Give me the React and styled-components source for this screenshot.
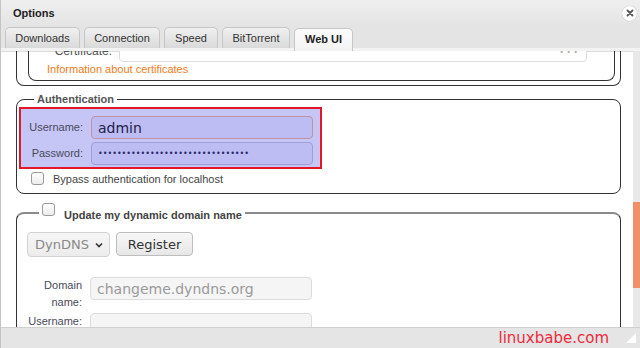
import React from 'react';
import styled, { createGlobalStyle } from 'styled-components';

const Global = createGlobalStyle`
	html, body { margin: 0; padding: 0; background: #fff; }
	body { font-family: 'Liberation Sans', Arial, sans-serif; font-size: 11px; color: #333; }
	* { box-sizing: border-box; }
`;

const Window = styled.div`
	width: 640px;
	height: 348px;
	display: flex;
	flex-direction: column;
	overflow: hidden;
	border-left: 1px solid #c4c4c4;
	background: #fff;
`;

const TitleBar = styled.div`
	height: 26px;
	flex: none;
	display: flex;
	align-items: center;
	justify-content: space-between;
	padding: 0 3px 0 12px;
	background: linear-gradient(#efefef, #e4e4e4);
	font-weight: 700;
	font-size: 11px;
	color: #222;
`;

const Close = styled.span`
	width: 15px;
	height: 15px;
	border-radius: 50%;
	background: #fff;
	display: flex;
	align-items: center;
	justify-content: center;
	box-shadow: 0 0 1px rgba(0, 0, 0, 0.3);
`;

const TabBar = styled.div`
	height: 25px;
	flex: none;
	display: flex;
	align-items: flex-end;
	gap: 4px;
	padding: 0 0 0 4px;
	background: #e4e4e4;
	border-bottom: 3px solid #f3f3f3;
	box-shadow: 0 1px 0 #dcdcdc;
`;

const Tab = styled.div`
	height: ${(p) => (p.$active ? '23px' : '21px')};
	margin-bottom: ${(p) => (p.$active ? '-3px' : '0')};
	display: flex;
	align-items: center;
	justify-content: center;
	width: ${(p) => p.$w}px;
	border: 1px solid #c6c6c6;
	border-bottom: none;
	border-radius: 5px 5px 0 0;
	background: ${(p) => (p.$active ? 'linear-gradient(#fbfbfb, #f3f3f3)' : 'linear-gradient(#f0f0f0, #dadada)')};
	font-weight: ${(p) => (p.$active ? 700 : 400)};
	color: ${(p) => (p.$active ? '#222' : '#333')};
	padding-bottom: ${(p) => (p.$active ? '2px' : '0')};
`;

const Body = styled.div`
	flex: 1;
	display: flex;
	min-height: 0;
`;

const Content = styled.div`
	flex: 1;
	overflow: hidden;
	display: flex;
	flex-direction: column;
	padding: 0 12px 0 15px;
`;

const Scrollbar = styled.div`
	width: 7px;
	flex: none;
	background: #e8e8e8;
	padding-top: 151px;
`;

const Thumb = styled.div`
	height: 86px;
	background: #f08f68;
`;

const TailBox = styled.div`
	border: 1px solid #333;
	border-top: none;
	border-radius: 0 0 8px 8px;
	padding: ${(p) => p.$pad};
`;

const CertRow = styled.div`
	display: flex;
	align-items: center;
	margin-top: -11px;
	height: 22px;
	gap: 7px;
`;

const CertLabel = styled.span`
	width: 83px;
	text-align: right;
	color: #555;
	font-size: 12px;
`;

const CertInput = styled.div`
	width: 468px;
	height: 22px;
	border: 1px solid #ddd;
	border-radius: 4px;
	background: #fff;
	display: flex;
	align-items: flex-end;
	justify-content: flex-end;
	padding: 0 8px 5px;
	color: #aaa;
	font-size: 8px;
	letter-spacing: 1px;
`;

const InfoLink = styled.a`
	display: block;
	color: #f27c20;
	line-height: 14px;
	margin: 0 0 4px 18px;
	font-size: 11px;
`;

const Fieldset = styled.fieldset`
	margin: ${(p) => p.$mt}px 0 0;
	padding: 0 ${(p) => p.$px}px ${(p) => p.$pb}px;
	border: 1px solid #333;
	border-top: ${(p) => (p.$softTop ? '2px solid #8a8a8a' : '1px solid #333')};
	border-radius: 8px;
	min-width: 0;
`;

const Legend = styled.legend`
	margin-left: ${(p) => p.$ml}px;
	padding: 0 3px;
	font-weight: 700;
	font-size: 11px;
	line-height: 13px;
	color: ${(p) => p.$color};
	display: flex;
	align-items: flex-end;
	gap: 9px;
`;

const Highlight = styled.div`
	margin-top: 1px;
	width: 303px;
	border: 2px solid #e3172b;
	background: #c5c5f6;
	padding: 7px 8px 2px 0;
	display: grid;
	grid-template-columns: 62px 222px;
	column-gap: 8px;
	row-gap: 3px;
	align-items: center;
`;

const Label = styled.span`
	text-align: right;
	color: #4a4a5a;
	font-size: 11px;
	line-height: ${(p) => p.$lh || 13}px;
	align-self: ${(p) => (p.$top ? 'start' : 'center')};
`;

const Input = styled.div`
	height: 23px;
	border-radius: 4px;
	border: 1px solid ${(p) => p.$border};
	background: ${(p) => p.$bg};
	display: flex;
	align-items: center;
	padding-left: 6px;
	font-family: 'DejaVu Sans', sans-serif;
	font-size: ${(p) => p.$size || 14}px;
	color: ${(p) => p.$color};
	overflow: hidden;
	white-space: nowrap;
`;

const CheckRow = styled.label`
	display: flex;
	align-items: center;
	gap: 9px;
	margin: 2px 0 0 12px;
	height: 15px;
	color: #444;
	font-size: 11px;
`;

const Check = styled.span`
	width: 13px;
	height: 13px;
	flex: none;
	border: 1px solid #9a9a9a;
	border-radius: 3px;
	background: linear-gradient(#fff, #ececec);
	margin-bottom: ${(p) => p.$mb || 0}px;
`;

const LegendText = styled.span`
	color: #444;
`;

const Controls = styled.div`
	display: flex;
	gap: 6px;
	margin-top: 10px;
`;

const Select = styled.div`
	width: 83px;
	height: 25px;
	border: 1px solid #d2d2d2;
	border-radius: 4px;
	background: linear-gradient(#f6f6f6, #ececec);
	display: flex;
	align-items: center;
	gap: 6px;
	padding-left: 7px;
	font-family: 'DejaVu Sans', sans-serif;
	font-size: 13px;
	color: #8a8a8a;
`;

const Button = styled.div`
	width: 77px;
	height: 24px;
	border: 1px solid #bdbdbd;
	border-radius: 4px;
	background: linear-gradient(#f7f7f7, #e7e7e7);
	display: flex;
	align-items: center;
	justify-content: center;
	font-family: 'DejaVu Sans', sans-serif;
	font-size: 13px;
	color: #333;
`;

const FormGrid = styled.div`
	display: grid;
	grid-template-columns: 56px 222px;
	column-gap: 8px;
	row-gap: 2px;
	margin-top: 20px;
	margin-left: -1px;
`;

const StatusBar = styled.div`
	height: 21px;
	flex: none;
	display: flex;
	align-items: center;
	justify-content: flex-end;
	gap: 17px;
	padding-right: 4px;
	background: #e5e5e5;
	border-top: 1px solid #d0d0d0;
`;

const Watermark = styled.span`
	font-family: 'DejaVu Sans', sans-serif;
	font-size: 15px;
	color: #ee2a3c;
`;

const tabs = [
	['Downloads', 75],
	['Connection', 76],
	['Speed', 54],
	['BitTorrent', 68],
	['Web UI', 59],
];

export default function App() {
	return (
		<>
			<Global />
			<Window>
				<TitleBar>
					Options
					<Close>
						<svg width='8' height='8' viewBox='0 0 8 8'>
							<path d='M1.5 1.5L6.5 6.5M6.5 1.5L1.5 6.5' stroke='#555' strokeWidth='1.8' strokeLinecap='round' />
						</svg>
					</Close>
				</TitleBar>
				<TabBar>
					{tabs.map(([name, w]) => (
						<Tab key={name} $w={w} $active={name === 'Web UI'}>
							{name}
						</Tab>
					))}
				</TabBar>
				<Body>
					<Content>
						<TailBox $pad='0 5px 4px 11px'>
							<TailBox $pad='0'>
								<CertRow>
									<CertLabel>Certificate:</CertLabel>
									<CertInput>• • •</CertInput>
								</CertRow>
								<InfoLink>Information about certificates</InfoLink>
							</TailBox>
						</TailBox>

						<Fieldset $mt={7} $px={2} $pb={7}>
							<Legend $ml={15} $color='#555'>Authentication</Legend>
							<Highlight>
								<Label>Username:</Label>
								<Input $border='#c4919f' $bg='#bdbdf3' $color='#22224a'>admin</Input>
								<Label>Password:</Label>
								<Input $border='#9f9fd6' $bg='#bdbdf3' $color='#2a2a66' $size={8}>
									{'•'.repeat(32)}
								</Input>
							</Highlight>
							<CheckRow>
								<Check />
								Bypass authentication for localhost
							</CheckRow>
						</Fieldset>

						<Fieldset $mt={9} $px={10} $pb={20} $softTop>
							<Legend $ml={12} $color='#444'>
								<Check $mb={6} />
								<LegendText>Update my dynamic domain name</LegendText>
							</Legend>
							<Controls>
								<Select>
									DynDNS
									<svg width='8' height='6' viewBox='0 0 8 6'>
										<path d='M1 1.5L4 4.5L7 1.5' fill='none' stroke='#333' strokeWidth='1.6' />
									</svg>
								</Select>
								<Button>Register</Button>
							</Controls>
							<FormGrid>
								<Label $lh={17} $top>
									Domain
									<br />
									name:
								</Label>
								<Input $border='#dcdcdc' $bg='#f5f5f5' $color='#9a9a9a'>changeme.dyndns.org</Input>
								<Label $lh={17} $top>Username:</Label>
								<Input $border='#dcdcdc' $bg='#f5f5f5' $color='#9a9a9a' />
							</FormGrid>
						</Fieldset>
					</Content>
					<Scrollbar>
						<Thumb />
					</Scrollbar>
				</Body>
				<StatusBar>
					<Watermark>linuxbabe.com</Watermark>
					<svg width='10' height='10' viewBox='0 0 10 10'>
						<path d='M10 0L10 10L0 10Z' fill='#fff' />
					</svg>
				</StatusBar>
			</Window>
		</>
	);
}
